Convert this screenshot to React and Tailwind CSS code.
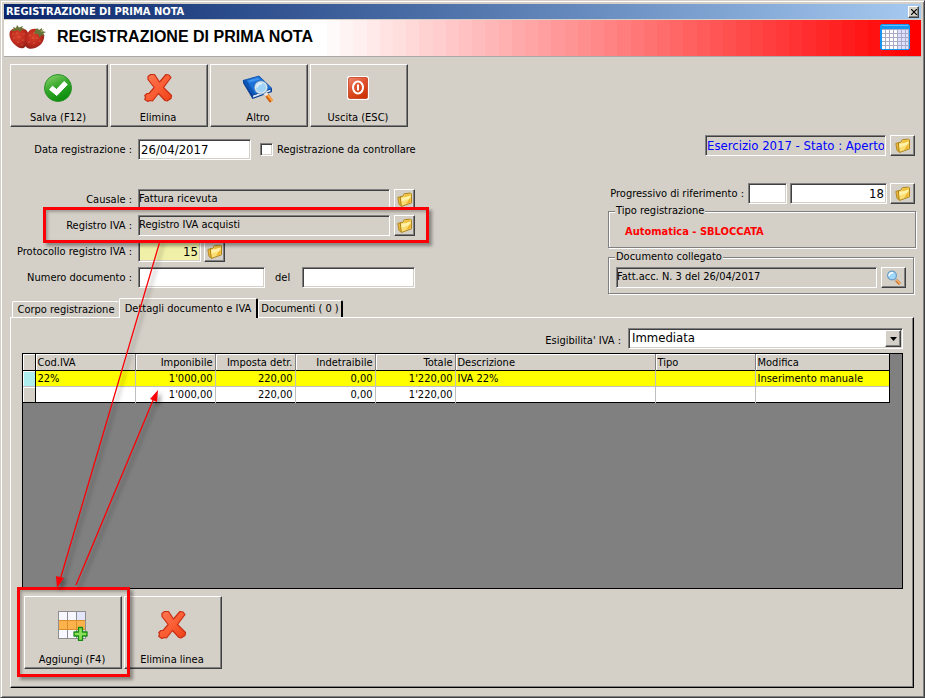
import React from "react";
import clsx from "clsx";

const raised =
  "border border-t-white border-l-white border-b-[#404040] border-r-[#404040] shadow-[inset_-1px_-1px_0_#808080]";
const sunken =
  "border border-t-[#808080] border-l-[#808080] border-b-white border-r-white shadow-[inset_1px_1px_0_#404040,inset_-1px_-1px_0_#d4d0c8] outline-none";
const ui = "font-['DejaVu_Sans_Condensed','DejaVu_Sans',sans-serif]";
const markBox =
  "pointer-events-none absolute border-[3px] border-[#fb0007] shadow-[3px_3px_3px_rgba(0,0,0,0.35),inset_2px_2px_3px_rgba(0,0,0,0.25)]";

function FolderIcon() {
  return (
    <svg width="16" height="16" viewBox="0 0 16 16" aria-hidden="true">
      <path d="M.8 5.500 4 4.500 5 14l-3-1.500z" fill="#e8b93a" stroke="#a87a10" strokeWidth=".8" strokeLinejoin="round" />
      <path d="M3.300 5 6 4.200 7.200 1.800 13.500 1l1 1V10.800L4.300 14.500z" fill="#fbdf74" stroke="#a87a10" strokeWidth=".9" strokeLinejoin="round" />
      <path d="M8 2.500 13.500 1.800v2L7 5.500z" fill="#f0bf3a" />
      <path d="M4.300 6 7.500 5.500l6-2v3L4.500 9.500z" fill="#fff1a8" />
      <path d="M13.600 5v5.200L9 12z" fill="#edb52c" />
    </svg>
  );
}

function GlassIcon() {
  return (
    <svg width="16" height="16" viewBox="0 0 16 16" aria-hidden="true">
      <path d="m9.500 9.500 4.500 4.500" stroke="#c96a1c" strokeWidth="3" />
      <path d="m10 9.500 4.500 4.500" stroke="#f7b26c" strokeWidth="1.600" />
      <path d="m8.800 8.800 1.500 1.500" stroke="#b8bcc4" strokeWidth="2.800" />
      <circle cx="6" cy="5.500" r="4.400" fill="#9fd8fa" stroke="#6f9cc0" strokeWidth="1.200" />
      <path d="M3 6a3 3 0 0 1 4-3" fill="none" stroke="#fff" strokeWidth="1.400" />
    </svg>
  );
}

function CheckIcon() {
  return (
    <svg width="32" height="32" viewBox="0 0 32 32" aria-hidden="true">
      <defs>
        <linearGradient id="green" x1=".2" y1="0" x2=".7" y2="1">
          <stop offset="0" stopColor="#86d06a" />
          <stop offset=".45" stopColor="#35a82a" />
          <stop offset="1" stopColor="#078a0a" />
        </linearGradient>
      </defs>
      <circle cx="16" cy="16" r="13.500" fill="url(#green)" stroke="#2b9228" />
      <path d="m7.500 17.500 3-3.300 4 3.300 7.500-8 3.300 3L14.800 23.500z" fill="#fff" stroke="#fff" strokeLinejoin="round" />
    </svg>
  );
}

function CrossIcon() {
  return (
    <svg width="32" height="32" viewBox="0 0 32 32" aria-hidden="true">
      <defs>
        <linearGradient id="red" x1="0" y1="0" x2="1" y2="1">
          <stop offset="0" stopColor="#fd7a55" />
          <stop offset=".5" stopColor="#fb5f36" />
          <stop offset="1" stopColor="#ee4016" />
        </linearGradient>
      </defs>
      <path
        d="M6 4.500 8.500 2.500 12.500 2.500 17.500 10 24 2.500 27 3 29 5.500 21.500 15.500 29.500 23.500 29 26.500 25 29 23 28.500 16.500 21.500 10.500 29 8 28.500 6 29.500 2.800 27.500 3.500 25 2.800 23.500 5 21.500 7 21.500 12.200 15.500 6 7.500z"
        fill="url(#red)"
        stroke="#c92d12"
        strokeWidth="1.200"
        strokeLinejoin="round"
      />
    </svg>
  );
}

function BookIcon() {
  return (
    <svg width="32" height="32" viewBox="0 0 32 32" aria-hidden="true">
      <path d="M1 8v3l9.500 16L30 20v-3z" fill="#0a3f94" />
      <path d="M11 25.500 28.500 19.200v-1.700L11 23.500z" fill="#dfe8f2" />
      <path d="M1 8.500 17 4l13 12.500-19 6.500z" fill="#1b72d8" stroke="#0b4ba3" strokeWidth=".8" strokeLinejoin="round" />
      <path d="M1 8.500 4 7.700 13.500 22 11 23z" fill="#0e55b5" />
      <path d="M6 8.500 16 5.700 18 7.500 7.500 10.500z" fill="#3f93ee" />
      <path d="m23.500 21.500 6 8" stroke="#d2600f" strokeWidth="4" />
      <path d="m24.500 22 6 7" stroke="#ffab4a" strokeWidth="1.800" />
      <path d="m23 21 2 2.400" stroke="#e4e4e4" strokeWidth="4" />
      <circle cx="19" cy="15.500" r="6.900" fill="#6c95bd" />
      <circle cx="19" cy="15.500" r="6.200" fill="#dde6ec" />
      <circle cx="19" cy="15.500" r="5" fill="#9fd3f7" />
      <path d="M15 15.500a4 4 0 0 1 5-3.800" fill="none" stroke="#eaf7ff" strokeWidth="1.600" />
    </svg>
  );
}

function PowerIcon() {
  return (
    <svg width="32" height="32" viewBox="0 0 32 32" aria-hidden="true">
      <defs>
        <linearGradient id="power" x1="0" y1="0" x2=".6" y2="1">
          <stop offset="0" stopColor="#f08a70" />
          <stop offset=".5" stopColor="#e0512e" />
          <stop offset="1" stopColor="#cf3504" />
        </linearGradient>
      </defs>
      <rect x="5" y="4" width="22" height="24" rx="2.500" fill="#fff" />
      <rect x="6.500" y="5.500" width="19" height="21" rx="1.500" fill="url(#power)" stroke="#c23b1c" strokeWidth=".8" />
      <ellipse cx="16" cy="15.500" rx="5" ry="6" fill="none" stroke="#fff" strokeWidth="2" />
      <path d="M16 12.500v6" stroke="#fff" strokeWidth="2" />
    </svg>
  );
}

function AddRowIcon() {
  return (
    <svg width="32" height="32" viewBox="0 0 32 32" aria-hidden="true">
      <path d="M2 2h28v28H2z" fill="#f7f7ff" />
      <path d="M20 2h10v28H20z" fill="#e3e5fb" />
      <path d="M2 11h28v9H2z" fill="#fdb24c" />
      <path d="M2 2.500h28M2.500 2v28M29.500 2v28M2 29.500h28M11.500 2v28M20.500 2v28M2 11.500h28M2 20.500h28" stroke="#8d8d8d" fill="none" />
      <path d="M3 11.500h26M3 20.500h26M11.500 12v8M20.500 12v8" stroke="#d98f2c" fill="none" />
      <path d="M22.500 18.500h4v4.500h4.500v4h-4.500v4.500h-4v-4.500h-4.500v-4h4.500z" fill="#8be05a" stroke="#178a10" strokeWidth="1.300" strokeLinejoin="round" />
    </svg>
  );
}

function CalendarIcon() {
  return (
    <svg width="30" height="26" viewBox="0 0 30 26" aria-hidden="true">
      <path d="M1 0h28v1h1v24h-1v1H1v-1H0V1h1z" fill="#1495f2" />
      <path d="M2 1h26v1H2z" fill="#5cc0ff" />
      <path d="M2 5h27v20H2z" fill="#a7abc4" />
      {[6, 10, 14, 18, 22].map((y) =>
        [2, 6, 10, 14, 18, 22, 26].map((x) => (
          <rect key={`${x}-${y}`} x={x} y={y} width={x === 26 ? 2 : 3} height="3" fill={x > 14 ? "#dfe0ff" : "#fdfdff"} />
        ))
      )}
    </svg>
  );
}

function StrawberryIcon() {
  return (
    <svg width="38" height="24" viewBox="0 0 38 24" aria-hidden="true">
      <defs>
        <radialGradient id="berry" cx=".45" cy=".4" r=".65">
          <stop offset="0" stopColor="#d8402a" />
          <stop offset=".6" stopColor="#bd2a1e" />
          <stop offset="1" stopColor="#8e1d16" />
        </radialGradient>
      </defs>
      <path d="M.5 10C0 5 4 3 9 3s9 1 10 5 0 11-3 14-8 0-11-3S.7 13 .5 10z" fill="url(#berry)" />
      <path d="M18 11c0-4 4-8 9-7s9 4 8 9-4 8-9 10-10 0-10-4 2-5 2-8z" fill="url(#berry)" />
      <path d="m2 6 3-2-1-2 3 1 1-3 2 2.500L14 1l-1 2 4 2-4-.5L11 7 9 5 5 6z" fill="#6b7434" />
      <path d="m26 6 2-3 2 2 3-2 0 3 4 1-3 1.500 2 2.500-4-1-1 3-2-4-4-.5z" fill="#66763a" />
      <path d="m31 6 4-2-2 3z" fill="#a0ad62" />
      <g fill="#e8a070">
        {[[4, 9], [8, 8], [5, 13], [10, 12], [15, 9], [9, 17], [14, 15], [13, 20], [21, 10], [24, 13], [20, 17], [28, 13], [25, 18], [31, 16], [25, 8]].map(([x, y]) => (
          <circle key={`${x}-${y}`} cx={x} cy={y} r=".5" />
        ))}
      </g>
    </svg>
  );
}

function ToolButton({ icon, children, tall }) {
  return (
    <button type="button" className={clsx(raised, "flex w-[98px] flex-col items-center justify-between pr-0.5 pb-0.5", tall ? "h-[73px] pt-3" : "h-[63px] pt-[7px]")}>
      {icon}
      <span className="leading-3">{children}</span>
    </button>
  );
}

function SmallButton({ label, wide, children }) {
  return (
    <button type="button" aria-label={label} className={clsx(raised, "flex h-[21px] shrink-0 items-center justify-center", wide ? "w-[25px]" : "w-[21px]")}>
      {children}
    </button>
  );
}

function Row({ id, label, children }) {
  return (
    <div className="relative flex h-[21px] items-center">
      <label htmlFor={id} className="mr-1.5 w-[122px] text-right">{label}</label>
      {children}
    </div>
  );
}

function Tab({ selected, children, className }) {
  return (
    <button
      type="button"
      role="tab"
      aria-selected={!!selected}
      className={clsx("rounded-t-[2px] border-t border-l border-white whitespace-nowrap", className)}
    >
      {children}
    </button>
  );
}

const BANDS = 45;
const columns = [
  { name: "Cod.IVA", w: "w-[100px]" },
  { name: "Imponibile", w: "w-[80px]", right: true },
  { name: "Imposta detr.", w: "w-[80px]", right: true },
  { name: "Indetraibile", w: "w-[80px]", right: true },
  { name: "Totale", w: "w-[80px]", right: true },
  { name: "Descrizione", w: "w-[200px]" },
  { name: "Tipo", w: "w-[100px]" },
  { name: "Modifica", w: "w-[134px]" },
];
const rows = [
  ["22%", "1'000,00", "220,00", "0,00", "1'220,00", "IVA 22%", "", "Inserimento manuale"],
  ["", "1'000,00", "220,00", "0,00", "1'220,00", "", "", ""],
];

function VatTable() {
  return (
    <table className="w-[866px] table-fixed border-collapse bg-white leading-3">
      <thead>
        <tr className="h-4 border-b border-black bg-[#d4d0c8]">
          <th aria-label="Riga" className="w-[12px] border-r border-black p-0 shadow-[inset_1px_1px_0_#fff]" />
          {columns.map((c) => (
            <th key={c.name} className={clsx(c.w, "border-r border-[#808080] px-0.5 pt-0.5 pb-0 font-normal whitespace-nowrap shadow-[inset_1px_1px_0_#fff] last:border-black", c.right ? "text-right" : "text-left")}>
              {c.name}
            </th>
          ))}
        </tr>
      </thead>
      <tbody>
        {rows.map((r, i) => (
          <tr key={i} className={clsx("h-4 border-b", i === 0 ? "border-[#c0c0c0] bg-[#ffff00]" : "border-black")}>
            <td className={clsx("border-r border-black p-0 shadow-[inset_1px_1px_0_#fff]", i === 0 ? "bg-[#aeeeee]" : "bg-[#d4d0c8]")} />
            {r.map((v, j) => (
              <td key={j} className={clsx("border-r border-[#c0c0c0] px-0.5 pt-0.5 pb-0 whitespace-nowrap last:border-black", columns[j].right && "text-right")}>
                {v}
              </td>
            ))}
          </tr>
        ))}
      </tbody>
    </table>
  );
}

export default function App() {
  return (
    <div className={clsx(ui, "relative flex min-h-screen flex-col border border-t-[#d4d0c8] border-l-[#d4d0c8] border-r-[#404040] border-b-[#404040] bg-[#d4d0c8] px-[3px] pt-[3px] pb-[9px] text-[11px] leading-[14px] text-black shadow-[inset_1px_1px_0_#fff,inset_-1px_-1px_0_#808080]")}>
      <div className="flex h-[15px] items-center justify-between bg-linear-to-r from-[#0a246a] to-[#a6caf0] pr-0.5 pl-0.5 font-bold text-white">
        <span>REGISTRAZIONE DI PRIMA NOTA</span>
        <button type="button" aria-label="Chiudi" className={clsx(raised, "flex h-3 w-[11px] items-center justify-center bg-[#d4d0c8]")}>
          <svg width="6" height="6" viewBox="0 0 6 6" aria-hidden="true"><path d="m0 0 6 6M6 0 0 6" stroke="#000" strokeWidth="1.200" /></svg>
        </button>
      </div>

      <header className="relative mt-px flex h-[37px] border-b border-[#a8a8a8] bg-white">
        <div className="flex w-[323px] items-center pb-0.5 pl-[5px]">
          <StrawberryIcon />
          <h1 className="ml-2.5 font-['Liberation_Sans',Arial,sans-serif] text-[16px] leading-5 font-bold whitespace-nowrap">REGISTRAZIONE DI PRIMA NOTA</h1>
        </div>
        <div className="flex flex-1">
          {Array.from({ length: BANDS }, (_, i) => {
            const v = Math.round(250 - (i * 250) / (BANDS - 1));
            return <div key={i} className="flex-1" style={{ backgroundColor: `rgb(255,${v},${v})` }} />;
          })}
        </div>
        <div className="absolute top-1 right-[11px]"><CalendarIcon /></div>
      </header>

      <div className="mt-[7px] ml-1.5 flex gap-0.5">
        <ToolButton icon={<CheckIcon />}>Salva (F12)</ToolButton>
        <ToolButton icon={<CrossIcon />}>Elimina</ToolButton>
        <ToolButton icon={<BookIcon />}>Altro</ToolButton>
        <ToolButton icon={<PowerIcon />}>Uscita (ESC)</ToolButton>
      </div>

      <div className="flex justify-between pr-[5px] pl-1.5">
        <div className="mt-3 flex flex-col gap-[5px]">
          <div className="mb-6">
            <Row id="data" label="Data registrazione :">
              <input id="data" defaultValue="26/04/2017" className={clsx(sunken, "h-[21px] w-[113px] bg-white px-0.5 text-[13px]")} />
              <input id="controllo" type="checkbox" className={clsx(sunken, "mr-1 ml-[9px] size-[13px] appearance-none bg-white checked:bg-black")} />
              <label htmlFor="controllo">Registrazione da controllare</label>
            </Row>
          </div>
          <Row id="causale" label="Causale :">
            <input id="causale" readOnly defaultValue="Fattura ricevuta" className={clsx(sunken, "mr-1 h-[21px] w-[252px] pb-0.5")} />
            <SmallButton label="Scegli causale"><FolderIcon /></SmallButton>
          </Row>
          <Row id="registro" label="Registro IVA :">
            <input id="registro" readOnly defaultValue="Registro IVA acquisti" className={clsx(sunken, "mr-1 h-[21px] w-[252px] pb-0.5")} />
            <SmallButton label="Scegli registro"><FolderIcon /></SmallButton>
            <div className={clsx(markBox, "top-[-8px] left-[33px] z-10 h-9 w-[386px]")} />
          </Row>
          <Row id="protocollo" label="Protocollo registro IVA :">
            <input id="protocollo" defaultValue="15" className={clsx(sunken, "mr-[3px] h-[21px] w-[63px] bg-[#f0f0a8] pr-0.5 text-right text-[13px]")} />
            <SmallButton label="Scegli protocollo"><FolderIcon /></SmallButton>
          </Row>
          <Row id="numero" label="Numero documento :">
            <input id="numero" className={clsx(sunken, "h-[21px] w-[127px] bg-white px-0.5 text-[13px]")} />
            <label htmlFor="del" className="w-[37px] pl-2.5">del</label>
            <input id="del" className={clsx(sunken, "h-[21px] w-[113px] bg-white px-0.5 text-[13px]")} />
          </Row>
        </div>

        <div className="mt-2 flex w-[308px] flex-col">
          <div className="flex justify-end pr-px">
            <input aria-label="Esercizio" readOnly defaultValue="Esercizio 2017 - Stato : Aperto" className={clsx(sunken, "mr-1 h-[21px] w-[181px] px-px text-[13px] text-[#0000ff]")} />
            <SmallButton wide label="Scegli esercizio"><FolderIcon /></SmallButton>
          </div>
          <div className="mt-[27px] flex items-center justify-end pr-px">
            <label htmlFor="progressivo" className="mr-1 whitespace-nowrap">Progressivo di riferimento :</label>
            <input id="progressivo" className={clsx(sunken, "mr-[3px] h-[21px] w-[39px] bg-white text-[13px]")} />
            <input aria-label="Numero progressivo" defaultValue="18" className={clsx(sunken, "mr-[3px] h-[21px] w-[97px] bg-white pr-0.5 text-right text-[13px]")} />
            <SmallButton wide label="Scegli progressivo"><FolderIcon /></SmallButton>
          </div>
          <fieldset className="mt-px h-[43px] border border-[#808080] px-4 pt-2 shadow-[1px_1px_0_#fff,inset_1px_1px_0_#fff]">
            <legend className="-ml-2.5 bg-[#d4d0c8] px-px leading-3">Tipo registrazione</legend>
            <p className="font-bold text-[#ff0000]">Automatica - SBLOCCATA</p>
          </fieldset>
          <fieldset className="mt-[3px] mr-0.5 h-[43px] border border-[#808080] px-[7px] pt-1 shadow-[1px_1px_0_#fff,inset_1px_1px_0_#fff]">
            <legend className="-ml-px bg-[#d4d0c8] px-px leading-3">Documento collegato</legend>
            <div className="flex gap-1">
              <input aria-label="Documento collegato" readOnly defaultValue="Fatt.acc. N. 3 del 26/04/2017" className={clsx(sunken, "h-[21px] min-w-0 flex-1 pb-0.5")} />
              <SmallButton wide label="Cerca documento"><GlassIcon /></SmallButton>
            </div>
          </fieldset>
        </div>
      </div>

      <div role="tablist" className="mt-1 ml-2 flex h-[19px] items-end">
        <Tab className="h-4 w-[107px]">Corpo registrazione</Tab>
        <Tab selected className="relative z-10 -mb-px h-5 w-[139px] border-r-2 border-r-black bg-[#d4d0c8]">Dettagli documento e IVA</Tab>
        <Tab className="h-[17px] w-[85px] border-r-2 border-r-black">Documenti ( 0 )</Tab>
      </div>

      <main className="mr-[7px] ml-1.5 flex flex-1 flex-col border border-t-white border-l-white border-r-black border-b-black pt-2.5 pr-2.5 pb-[18px] pl-[11px] shadow-[inset_-1px_-1px_0_#808080]">
        <div className="flex h-[21px] items-center justify-end">
          <label htmlFor="esigibilita" className="mr-[7px] pt-1">Esigibilita' IVA :</label>
          <div className="relative">
            <select id="esigibilita" className={clsx(sunken, "block h-[21px] w-[275px] appearance-none bg-white px-[3px] pb-0.5 text-[13px] leading-4")}>
              <option>Immediata</option>
            </select>
            <span className={clsx(raised, "pointer-events-none absolute top-0.5 right-0.5 flex h-[17px] w-4 items-center justify-center bg-[#d4d0c8]")}>
              <svg width="7" height="4" viewBox="0 0 7 4" aria-hidden="true"><path d="M0 0h7L3.500 4z" /></svg>
            </span>
          </div>
        </div>

        <div className="mt-1 min-h-[236px] flex-1 border border-black bg-[#808080]">
          <VatTable />
        </div>

        <div className="mt-[7px] flex gap-0.5 pl-0.5">
          <div className="relative">
            <ToolButton tall icon={<AddRowIcon />}>Aggiungi (F4)</ToolButton>
            <div className={clsx(markBox, "top-[-9px] left-[-7px] z-10 h-[90px] w-[113px]")} />
          </div>
          <ToolButton tall icon={<CrossIcon />}>Elimina linea</ToolButton>
        </div>
      </main>

      <svg className="pointer-events-none absolute top-0 left-0 z-20 drop-shadow-[3px_3px_2px_rgba(0,0,0,0.4)]" width="240" height="600" viewBox="1 1 240 600" aria-hidden="true">
        <path d="M160 241 60 580M76 585l78-187" fill="none" stroke="#fb0007" strokeWidth="1.300" />
        <path d="m57 588-1-12 8 2zM158 390l-8 9 7 3z" fill="#fb0007" />
      </svg>
    </div>
  );
}
